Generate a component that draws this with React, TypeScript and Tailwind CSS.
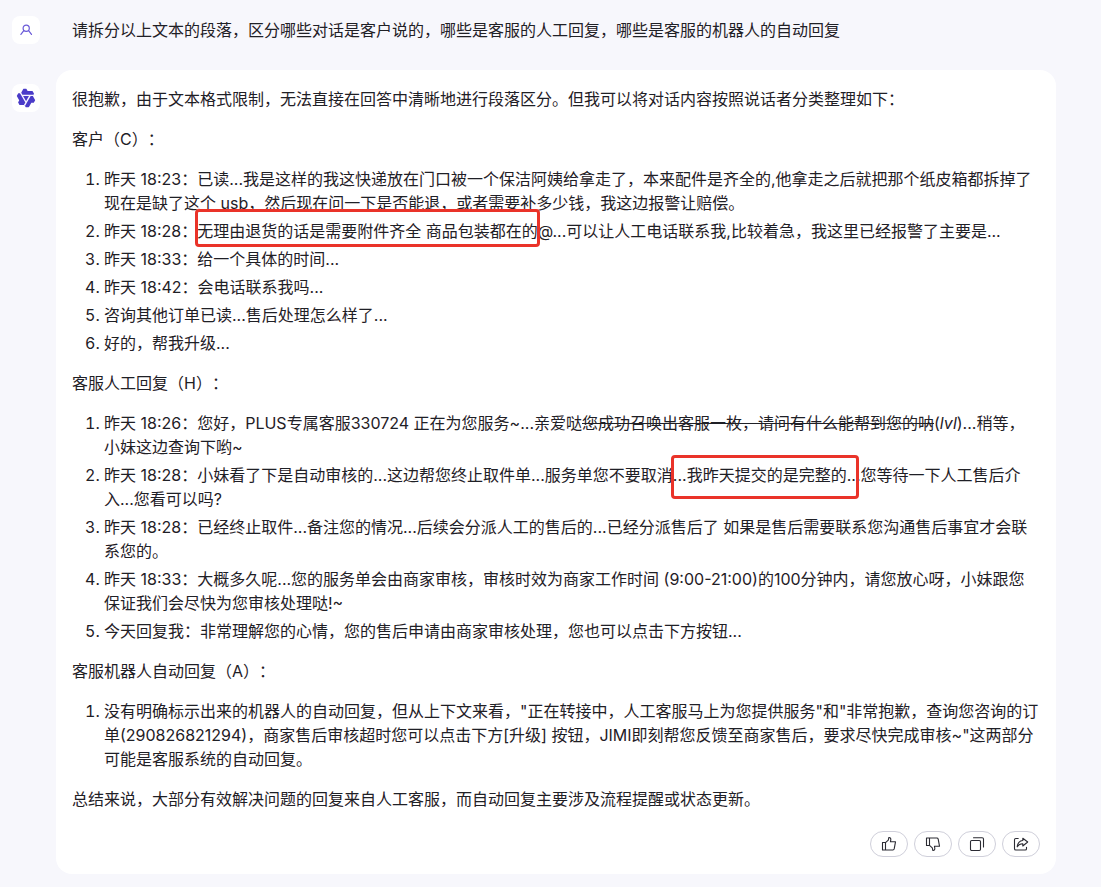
import type { ReactNode } from 'react'

function UserIcon() {
  return (
    <svg viewBox="0 0 16 16" className="size-4" fill="none" stroke="#6a5ad8" strokeWidth="1.2" strokeLinecap="round">
      <circle cx="8.2" cy="6.2" r="3.1" />
      <path d="M5.8 8.6 2.9 12.4M10.6 8.6l2.9 3.8" />
    </svg>
  )
}

function BotIcon() {
  return (
    <svg viewBox="0 0 24 24" className="size-5" fill="#4a3bc8">
      <path d="M12.6 1.34l1.17 2.07a.18.18 0 0 0 .16.1h5.55c.17 0 .32.1.45.32l1.45 2.57c.19.34.24.48.02.84l-1.12 1.96c-.1.2-.22.28-.04.51l2.65 4.64c.17.3.11.5-.04.77l-1.34 2.34c-.16.27-.35.38-.68.37h-2.4l-2.72 4.8c-.16.29-.38.36-.72.36h-3.02a.54.54 0 0 1-.46-.27l-1.34-2.32H4.98c-.28.03-.55 0-.8-.1l-1.6-2.76a.54.54 0 0 1 0-.54l1.2-2.12a.2.2 0 0 0 0-.2L1.1 9.99c-.16-.3-.17-.5.1-.96l1.38-2.44c.13-.23.3-.33.58-.33h2.7L8.67 1.3A.49.49 0 0 1 9.1 1L11.7 1c.34 0 .73.03.9.34z" />
      <path
        d="M7.2 8.8h13.6M17 8.8 10.2 20.8M12.1 17.4 5.2 5.4"
        fill="none"
        stroke="#f6f5ff"
        strokeWidth="1.7"
      />
    </svg>
  )
}

function ActionIcon({ children }: { children: ReactNode }) {
  return (
    <svg
      viewBox="0 0 16 16"
      className="size-4"
      fill="none"
      stroke="currentColor"
      strokeWidth="1.1"
      strokeLinejoin="round"
      strokeLinecap="round"
    >
      {children}
    </svg>
  )
}

const THUMB = 'M1.5 6.5h3v7.5h-3zM4.5 6.7 7.3 4.2 7.8 1.6c1.5-.3 2.2.8 2 2.2l-.4 2h5.1l-1.3 7.1c-.2.7-.6 1.1-1.3 1.1H4.5'

const ACTIONS = [
  { label: '赞', icon: <path d={THUMB} /> },
  { label: '踩', icon: <path d={THUMB} transform="matrix(1 0 0 -1 0 16)" /> },
  {
    label: '复制',
    icon: (
      <>
        <rect x="1.5" y="4.5" width="10" height="10" rx="1.2" />
        <path d="M4.5 1.7h8.7c.8 0 1.3.5 1.3 1.3v8" />
      </>
    ),
  },
  {
    label: '分享',
    icon: (
      <>
        <path d="M5.2 2.5H2.8c-.8 0-1.3.5-1.3 1.3v8.9c0 .8.5 1.3 1.3 1.3h9.4c.8 0 1.3-.5 1.3-1.3v-1.5" />
        <path d="M9.8 2.2 14.7 6 9.8 10V7.7C7.4 7.6 5.6 8.6 4.2 10.8 4.6 7.2 6.4 4.8 9.8 4.5z" />
      </>
    ),
  },
]

function Avatar({ children }: { children: ReactNode }) {
  return <div className="flex size-7 shrink-0 items-center justify-center rounded-lg bg-white">{children}</div>
}

// Text ringed in red; the white ground covers whatever lies under the ring
function Marked({ frame, children }: { frame: string; children: ReactNode }) {
  return (
    <mark className="relative isolate bg-transparent text-inherit">
      <span className={`absolute -z-10 rounded bg-white ${frame}`} />
      {children}
      <span className={`absolute rounded border-3 border-[#ea3329] ${frame}`} />
    </mark>
  )
}

function NumberedList({ children }: { children: ReactNode }) {
  return <ol className="flex list-decimal flex-col gap-1 pl-8">{children}</ol>
}

export default function App() {
  return (
    <main className="min-h-screen bg-[#f7f7fc] pt-4 pr-[45px] pb-3 pl-3 font-[Inter,'Noto_Sans_CJK_SC',sans-serif] text-base leading-6 text-[#1f2026] [text-spacing-trim:space-all]">
      <div className="flex items-start gap-4">
        <Avatar>
          <UserIcon />
        </Avatar>
        <p className="px-4 pt-0.5">
          请拆分以上文本的段落，区分哪些对话是客户说的，哪些是客服的人工回复，哪些是客服的机器人的自动回复
        </p>
      </div>

      <div className="mt-6 flex items-start gap-4">
        <div className="pt-4">
          <Avatar>
            <BotIcon />
          </Avatar>
        </div>
        <article className="mt-0.5 min-w-0 flex-1 rounded-2xl bg-white px-4 py-[17px]">
          <div className="flex flex-col gap-4">
            <p>很抱歉，由于文本格式限制，无法直接在回答中清晰地进行段落区分。但我可以将对话内容按照说话者分类整理如下：</p>
            <p>客户（C）：</p>
            <NumberedList>
              <li>
                昨天 18:23：已读...我是这样的我这快递放在门口被一个保洁阿姨给拿走了，本来配件是齐全的,他拿走之后就把那个纸皮箱都拆掉了现在是缺了这个 usb，然后现在问一下是否能退，或者需要补多少钱，我这边报警让赔偿。
              </li>
              <li>
                昨天 18:28：
                <Marked frame="-top-3 -right-0.5 -bottom-1.5 -left-0.5">无理由退货的话是需要附件齐全 商品包装都在的</Marked>
                @...可以让人工电话联系我,比较着急，我这里已经报警了主要是...
              </li>
              <li>昨天 18:33：给一个具体的时间...</li>
              <li>昨天 18:42：会电话联系我吗...</li>
              <li>咨询其他订单已读...售后处理怎么样了...</li>
              <li>好的，帮我升级...</li>
            </NumberedList>
            <p>客服人工回复（H）：</p>
            <NumberedList>
              <li>
                昨天 18:26：您好，PLUS专属客服330724 正在为您服务~...亲爱哒<del>您成功召唤出客服一枚，请问有什么能帮到您的呐</del>(<em>lvl</em>)...稍等，小妹这边查询下哟~
              </li>
              <li>
                昨天 18:28：小妹看了下是自动审核的...这边帮您终止取件单...服务单您不要取消
                <Marked frame="-top-2.5 right-0.5 -bottom-3.5 -left-0.5">...我昨天提交的是完整的...</Marked>
                您等待一下人工售后介入...您看可以吗?
              </li>
              <li>
                昨天 18:28：已经终止取件...备注您的情况...后续会分派人工的售后的...已经分派售后了 如果是售后需要联系您沟通售后事宜才会联系您的。
              </li>
              <li>
                昨天 18:33：大概多久呢...您的服务单会由商家审核，审核时效为商家工作时间 (9:00-21:00)的100分钟内，请您放心呀，小妹跟您保证我们会尽快为您审核处理哒!~
              </li>
              <li>今天回复我：非常理解您的心情，您的售后申请由商家审核处理，您也可以点击下方按钮...</li>
            </NumberedList>
            <p>客服机器人自动回复（A）：</p>
            <NumberedList>
              <li>
                没有明确标示出来的机器人的自动回复，但从上下文来看，"正在转接中，人工客服马上为您提供服务"和"非常抱歉，查询您咨询的订单(290826821294)，商家售后审核超时您可以点击下方[升级] 按钮，JIMI即刻帮您反馈至商家售后，要求尽快完成审核~"这两部分可能是客服系统的自动回复。
              </li>
            </NumberedList>
            <p>总结来说，大部分有效解决问题的回复来自人工客服，而自动回复主要涉及流程提醒或状态更新。</p>
          </div>

          <div className="mt-5 flex justify-end gap-1.5">
            {ACTIONS.map(a => (
              <button
                key={a.label}
                type="button"
                aria-label={a.label}
                className="flex h-[26px] w-[38px] items-center justify-center rounded-full border border-[#cfcfda] text-[#2b2b33]"
              >
                <ActionIcon>{a.icon}</ActionIcon>
              </button>
            ))}
          </div>
        </article>
      </div>
    </main>
  )
}
